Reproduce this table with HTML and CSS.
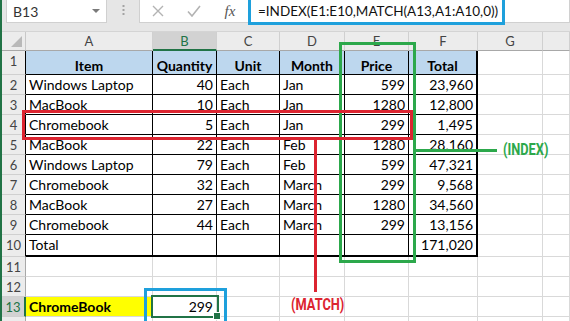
FILE: index.html
```html
<!DOCTYPE html>
<html lang="en">
<head>
    <meta charset="UTF-8">
    <meta name="viewport" content="width=device-width, initial-scale=1.0">
    <title>INDEX MATCH</title>
    <link rel="stylesheet" href="styles.css">
</head>
<body>
    <div class="page">
        <div class="window">
            <!-- name box + formula bar -->
            <div class="toolbar">
                <div class="namebox">
                    <span>B13</span>
                    <span class="drop"></span>
                </div>
                <svg class="grip" width="3" height="14" viewBox="0 0 3 14">
                    <rect x="0.5" y="2" width="2" height="2" fill="#a3a3a3"/>
                    <rect x="0.5" y="6" width="2" height="2" fill="#a3a3a3"/>
                    <rect x="0.5" y="10" width="2" height="2" fill="#a3a3a3"/>
                </svg>
                <div class="formula">
                    <span class="fbtn">
                        <svg width="12" height="12" viewBox="0 0 12 12"><path d="M1 1 L11 11 M11 1 L1 11" stroke="#b3b3b3" stroke-width="1.4" fill="none"/></svg>
                    </span>
                    <span class="fbtn">
                        <svg width="14" height="12" viewBox="0 0 14 12"><path d="M1 6.5 L5 11 L13 1" stroke="#b3b3b3" stroke-width="1.6" fill="none"/></svg>
                    </span>
                    <span class="fbtn fx">fx</span>
                    <span class="ftext">=INDEX(E1:E10,MATCH(A13,A1:A10,0))</span>
                </div>
            </div>

            <div class="sheet">
                <div class="corner">
                    <svg width="11" height="11" viewBox="0 0 11 11"><polygon points="11,0 11,11 0,11" fill="#b9b9b9"/></svg>
                </div>
                <div class="col">A</div>
                <div class="col on">B</div>
                <div class="col">C</div>
                <div class="col">D</div>
                <div class="col">E</div>
                <div class="col">F</div>
                <div class="col">G</div>
                <div class="col"></div>

                <div class="rh tb">1</div>
                <div class="c t hd">Item</div>
                <div class="c t hd">Quantity</div>
                <div class="c t hd">Unit</div>
                <div class="c t hd">Month</div>
                <div class="c t hd">Price</div>
                <div class="c t hd fr">Total</div>
                <div class="c top"></div>
                <div class="c top"></div>

                <div class="rh tb">2</div>
                <div class="c t">Windows Laptop</div>
                <div class="c t n">40</div>
                <div class="c t">Each</div>
                <div class="c t">Jan</div>
                <div class="c t n">599</div>
                <div class="c t n fr">23,960</div>
                <div class="c"></div>
                <div class="c"></div>

                <div class="rh tb">3</div>
                <div class="c t">MacBook</div>
                <div class="c t n">10</div>
                <div class="c t">Each</div>
                <div class="c t">Jan</div>
                <div class="c t n">1280</div>
                <div class="c t n fr">12,800</div>
                <div class="c"></div>
                <div class="c"></div>

                <div class="rh tb">4</div>
                <div class="c t">Chromebook</div>
                <div class="c t n">5</div>
                <div class="c t">Each</div>
                <div class="c t">Jan</div>
                <div class="c t n">299</div>
                <div class="c t n fr">1,495</div>
                <div class="c"></div>
                <div class="c"></div>

                <div class="rh tb">5</div>
                <div class="c t">MacBook</div>
                <div class="c t n">22</div>
                <div class="c t">Each</div>
                <div class="c t">Feb</div>
                <div class="c t n">1280</div>
                <div class="c t n fr">28,160</div>
                <div class="c"></div>
                <div class="c"></div>

                <div class="rh tb">6</div>
                <div class="c t">Windows Laptop</div>
                <div class="c t n">79</div>
                <div class="c t">Each</div>
                <div class="c t">Feb</div>
                <div class="c t n">599</div>
                <div class="c t n fr">47,321</div>
                <div class="c"></div>
                <div class="c"></div>

                <div class="rh tb">7</div>
                <div class="c t">Chromebook</div>
                <div class="c t n">32</div>
                <div class="c t">Each</div>
                <div class="c t">March</div>
                <div class="c t n">299</div>
                <div class="c t n fr">9,568</div>
                <div class="c"></div>
                <div class="c"></div>

                <div class="rh tb">8</div>
                <div class="c t">MacBook</div>
                <div class="c t n">27</div>
                <div class="c t">Each</div>
                <div class="c t">March</div>
                <div class="c t n">1280</div>
                <div class="c t n fr">34,560</div>
                <div class="c"></div>
                <div class="c"></div>

                <div class="rh tb">9</div>
                <div class="c t">Chromebook</div>
                <div class="c t n">44</div>
                <div class="c t">Each</div>
                <div class="c t">March</div>
                <div class="c t n">299</div>
                <div class="c t n fr">13,156</div>
                <div class="c"></div>
                <div class="c"></div>

                <div class="rh tb">10</div>
                <div class="c t lr">Total</div>
                <div class="c t lr"></div>
                <div class="c t lr"></div>
                <div class="c t lr"></div>
                <div class="c t lr"></div>
                <div class="c t n fr lr">171,020</div>
                <div class="c"></div>
                <div class="c"></div>

                <div class="rh">11</div>
                <div class="c"></div>
                <div class="c"></div>
                <div class="c"></div>
                <div class="c"></div>
                <div class="c"></div>
                <div class="c"></div>
                <div class="c"></div>
                <div class="c"></div>

                <div class="rh">12</div>
                <div class="c"></div>
                <div class="c"></div>
                <div class="c"></div>
                <div class="c"></div>
                <div class="c"></div>
                <div class="c"></div>
                <div class="c"></div>
                <div class="c"></div>

                <div class="rh on">13</div>
                <div class="c lookup">ChromeBook</div>
                <div class="c n active">299<span class="cursor"><span class="handle"></span></span></div>
                <div class="c"></div>
                <div class="c"></div>
                <div class="c"></div>
                <div class="c"></div>
                <div class="c"></div>
                <div class="c"></div>

                <!-- row 14, only its top edge shows -->
                <div class="rh"></div>
                <div class="c"></div>
                <div class="c"></div>
                <div class="c"></div>
                <div class="c"></div>
                <div class="c"></div>
                <div class="c"></div>
                <div class="c"></div>
                <div class="c"></div>
            </div>
        </div>

        <!-- callouts drawn on top of the sheet -->
        <div class="mark blue formula-mark"></div>
        <div class="mark green index-mark"></div>
        <div class="lead green-fill index-lead"></div>
        <div class="label index-label">(INDEX)</div>
        <div class="mark red match-mark"></div>
        <div class="lead red-fill match-lead"></div>
        <div class="label match-label">(MATCH)</div>
        <div class="mark blue result-mark"></div>
    </div>
</body>
</html>
```

FILE: styles.css
```css
body {
    margin: 0;
    font-family: Lato, "Liberation Sans", sans-serif;
    background: #fff;
    overflow: hidden;
}
.page {
    position: relative;
    width: 570px;
    height: 321px;
    overflow: hidden;
}
.window {
    border-left: 2px solid #217346;
    height: 100%;
}

/* top bar */
.toolbar {
    display: flex;
    align-items: flex-start;
    height: 31px;
    background: #e6e6e6;
    border-bottom: 1px solid #d4d4d4;
}
.namebox {
    margin-left: 4px;
    margin-top: -1px;
    width: 101px;
    height: 24px;
    box-sizing: border-box;
    background: #fff;
    border: 1px solid #d0d0d0;
    display: flex;
    align-items: center;
    justify-content: space-between;
    padding: 0 6px 0 6px;
    font-size: 14px;
    color: #333;
}
.drop {
    width: 0;
    height: 0;
    border-left: 4px solid transparent;
    border-right: 4px solid transparent;
    border-top: 4px solid #7a7a7a;
}
.grip {
    margin: 3px 14px 0 15px;
}
.formula {
    flex: 1;
    margin-top: -1px;
    height: 24px;
    box-sizing: border-box;
    background: #fff;
    border: 1px solid #d0d0d0;
    display: flex;
    align-items: center;
}
.fbtn {
    width: 36px;
    display: flex;
    justify-content: center;
}
.fx {
    font-family: "Liberation Serif", serif;
    font-style: italic;
    font-size: 15px;
    color: #555;
}
.ftext {
    margin-left: 10px;
    font-size: 13.5px;
    color: #111;
    white-space: nowrap;
}

/* grid */
.sheet {
    display: grid;
    grid-template-columns: 24px 127px 64px 63px 65px 64px 69px 65px 1fr;
    grid-template-rows: 19px 24px repeat(8, 20px) 22px repeat(4, 20px);
}
.corner,
.col,
.rh {
    background: #ececec;
    color: #444;
    font-size: 13px;
    box-sizing: border-box;
    text-align: center;
}
.corner {
    border-right: 1px solid #c8c8c8;
    border-bottom: 1px solid #a8a8a8;
    display: flex;
    align-items: flex-end;
    justify-content: flex-end;
    padding: 0 3px 3px 0;
}
.col {
    line-height: 19px;
    border-right: 1px solid #d0d0d0;
    border-bottom: 1px solid #a8a8a8;
}
.col.on {
    background: #d2d2d2;
    color: #217346;
    border-bottom: 2px solid #217346;
}
.rh {
    line-height: 20px;
    border-right: 1px solid #a8a8a8;
    border-bottom: 1px solid #d0d0d0;
}
.rh.tb {
    border-right-color: #000;
}
.rh.on {
    background: #d2d2d2;
    color: #217346;
    border-right: 2px solid #217346;
}

.c {
    box-sizing: border-box;
    border-right: 1px solid #d9d9d9;
    border-bottom: 1px solid #d9d9d9;
    padding: 0 3px;
    font-size: 14px;
    line-height: 20px;
    white-space: nowrap;
    color: #000;
}
.t {
    border-color: #000;
}
.n {
    text-align: right;
}
.fr {
    border-right-width: 2px;
}
.lr {
    border-bottom-width: 2px;
}
.hd {
    background: #bdd7ee;
    font-weight: bold;
    text-align: center;
    line-height: 19px;
    padding-top: 5px;
}
.lookup {
    background: #ffff00;
    font-weight: bold;
}
.active {
    position: relative;
}
.cursor {
    position: absolute;
    left: -2px;
    top: -2px;
    width: 68px;
    height: 23px;
    box-sizing: border-box;
    border: 2px solid #217346;
}
.handle {
    position: absolute;
    right: -4px;
    bottom: -4px;
    width: 6px;
    height: 6px;
    background: #217346;
    border: 1px solid #fff;
}

/* callouts */
.mark {
    position: absolute;
    box-sizing: border-box;
    border: 3px solid;
}
.blue {
    border-color: #1ea0dc;
}
.green {
    border-color: #2ca84b;
}
.red {
    border-color: #dc2430;
}
.green-fill {
    background: #2ca84b;
}
.red-fill {
    background: #dc2430;
}
.lead {
    position: absolute;
}
.formula-mark {
    left: 248px;
    top: -4px;
    width: 257px;
    height: 29px;
}
.index-mark {
    left: 339px;
    top: 42px;
    width: 77px;
    height: 221px;
}
.index-lead {
    left: 416px;
    top: 149px;
    width: 81px;
    height: 3px;
}
.match-mark {
    left: 22px;
    top: 110px;
    width: 391px;
    height: 30px;
}
.match-lead {
    left: 314px;
    top: 140px;
    width: 3px;
    height: 152px;
}
.result-mark {
    left: 144px;
    top: 288px;
    width: 83px;
    height: 40px;
}
/* condensed bold captions */
.label {
    position: absolute;
    font-family: "Roboto", sans-serif;
    font-weight: bold;
    font-size: 16px;
    line-height: 16px;
    white-space: nowrap;
    transform: scaleX(0.8);
    transform-origin: left center;
}
.index-label {
    left: 503px;
    top: 142px;
    color: #2ca84b;
}
.match-label {
    left: 291px;
    top: 297px;
    color: #dc2430;
}
```
